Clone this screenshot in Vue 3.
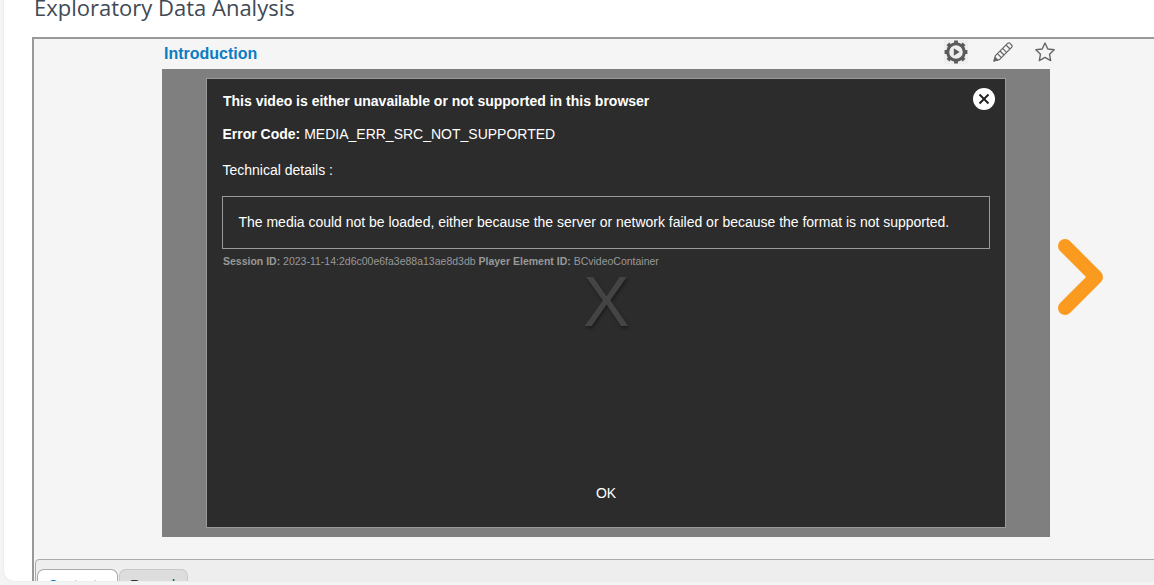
<script setup>
const tabs = [
  { label: 'Content', active: true },
  { label: 'Remark', active: false }
]
</script>

<template>
  <div class="page">
    <main class="card">
      <h1 class="title">Exploratory Data Analysis</h1>
      <section class="frame">
        <div class="stage">
          <div class="column">
            <div class="head">
              <a class="lesson">Introduction</a>
              <div class="tools">
                <svg class="ic gear" width="24" height="24" viewBox="0 0 24 24">
                  <circle cx="12" cy="12" r="8.300" fill="none" stroke="#5a5a5a" stroke-width="3" />
                  <g stroke="#5a5a5a" stroke-width="3.800">
                    <path d="M12 .6v3.400M12 20v3.400M.6 12H4M20 12h3.400M3.900 3.900l2.400 2.400M17.700 17.700l2.400 2.400M20.100 3.900l-2.400 2.400M6.300 17.700l-2.400 2.400" />
                  </g>
                  <path d="M9.800 8.200l5.800 3.800-5.800 3.800z" fill="#5a5a5a" />
                </svg>
                <svg class="ic" width="22" height="22" viewBox="0 0 22 22" fill="none" stroke="#666" stroke-width="1.200" stroke-linejoin="round">
                  <path d="M2 20l1.400-5.400L15.600 2.400c.7-.7 1.700-.7 2.400 0l1.600 1.600c.7.7.7 1.700 0 2.400L7.400 18.600z" />
                  <path d="M5.400 12.600l4 4M8 10l4 4M10.600 7.400l4 4M14 4l4 4" />
                  <path d="M2 20l1-3.600 2.600 2.600z" fill="#666" />
                </svg>
                <svg class="ic" width="22" height="22" viewBox="0 0 22 22" fill="none" stroke="#666" stroke-width="1.400" stroke-linejoin="round">
                  <path d="M11 2l2.800 6 6.400.8-4.700 4.400 1.200 6.400L11 16.400l-5.700 3.200 1.200-6.400L1.800 8.800 8.200 8z" />
                </svg>
              </div>
            </div>
            <div class="player">
              <div class="dialog">
                <button class="close" aria-label="Close">
                  <svg width="12" height="12" viewBox="0 0 12 12">
                    <path d="M1.500 1.500l9 9M10.500 1.500l-9 9" stroke="#222" stroke-width="2" />
                  </svg>
                </button>
                <h2 class="err-title">This video is either unavailable or not supported in this browser</h2>
                <p class="code"><b>Error Code:</b> MEDIA_ERR_SRC_NOT_SUPPORTED</p>
                <p class="tech">Technical details :</p>
                <div class="details">The media could not be loaded, either because the server or network failed or because the format is not supported.</div>
                <p class="session"><b>Session ID:</b> 2023-11-14:2d6c00e6fa3e88a13ae8d3db <b>Player Element ID:</b> BCvideoContainer</p>
                <div class="mark">X</div>
                <div class="ok">OK</div>
              </div>
            </div>
          </div>
          <svg class="next" width="48" height="80" viewBox="0 0 48 80">
            <path d="M8 7l31 31L8 69" fill="none" stroke="#fa9a1f" stroke-width="14" stroke-linecap="round" stroke-linejoin="round" />
          </svg>
        </div>
        <div class="tabs">
          <div v-for="t in tabs" :key="t.label" class="tab" :class="{ active: t.active }">{{ t.label }}</div>
        </div>
      </section>
    </main>
  </div>
</template>

<style>
html, body { margin: 0; background: #f4f4f4; overflow: hidden; }
</style>

<style scoped>
.page {
  width: 1154px;
  height: 585px;
  overflow: hidden;
  font-family: "Liberation Sans", Arial, sans-serif;
}
.card {
  margin-left: 4px;
  height: 581px;
  background: #fff;
  border-bottom-left-radius: 10px;
  box-shadow: 0 0 2px #ddd;
  overflow: hidden;
  padding-left: 28px;
}
.title {
  margin: -5px 0 0 2px;
  height: 42px;
  font: 400 22px/24px "Open Sans", sans-serif;
  color: #3f4a56;
}
.frame {
  width: 1200px;
  border: 2px solid #999;
  background: #f5f5f5;
  padding-left: 1px;
}
.stage {
  display: flex;
  align-items: flex-start;
  padding-left: 127px;
  height: 520px;
}
.column { width: 888px; flex: none; }
.head {
  height: 30px;
  display: flex;
  align-items: center;
  justify-content: space-between;
  padding: 0 0 0 2px;
}
.lesson {
  font-size: 16px;
  font-weight: 700;
  color: #0a7cc2;
}
.tools {
  display: flex;
  align-items: center;
  margin: -4px -6px 0 0;
  gap: 20px;
}
.gear { background: #eee; margin-right: 4px; }
.player {
  height: 468px;
  background: #7f7f7f;
  padding: 9px 44px;
  box-sizing: border-box;
}
.dialog {
  position: relative;
  height: 450px;
  box-sizing: border-box;
  background: #2c2c2c;
  border: 1px solid #999;
  padding: 14px 15px 0;
  color: #fff;
  font-size: 14px;
}
.close {
  position: absolute;
  right: 10px;
  top: 9px;
  width: 22px;
  height: 22px;
  border: 0;
  padding: 0;
  border-radius: 50%;
  background: #fff;
  display: flex;
  align-items: center;
  justify-content: center;
}
.err-title {
  margin: 0 0 0 1px;
  font-size: 14px;
  line-height: 16px;
}
.code { margin: 17px 0 0 .5px; line-height: 16px; }
.tech { margin: 20px 0 0 .5px; line-height: 16px; }
.details {
  margin-top: 18px;
  height: 53px;
  box-sizing: border-box;
  border: 1px solid #999;
  padding: 0 15.500px;
  line-height: 50px;
  letter-spacing: -.012px;
  white-space: nowrap;
}
.session {
  margin: 6px 0 0 1px;
  font-size: 10.500px;
  line-height: 13px;
  color: #999;
}
.mark {
  position: absolute;
  left: 376px;
  top: 183px;
  font-size: 70px;
  line-height: 80px;
  color: #444;
  text-shadow: 1px 2px 3px #1c1c1c;
}
.ok {
  position: absolute;
  left: 0;
  right: 0;
  top: 406px;
  text-align: center;
  line-height: 16px;
}
.next { margin: 200px 0 0 7px; flex: none; }
.tabs {
  margin-top: 0;
  height: 60px;
  border: 1px solid #aaa;
  border-radius: 4px 0 0 0;
  background: #eee;
  padding: 9px 0 0 1px;
  display: flex;
  gap: 1px;
}
.tab {
  height: 40px;
  box-sizing: border-box;
  border: 1px solid #c8c8c8;
  border-bottom: 0;
  border-radius: 7px 7px 0 0;
  background: #ddd;
  padding: 7px 10px 0;
  font-size: 14px;
  color: #333;
}
.tab.active {
  width: 81px;
  background: #fff;
  border-color: #aaa;
  color: #0a7cc2;
}
.tab:not(.active) { width: 69px; }
</style>
